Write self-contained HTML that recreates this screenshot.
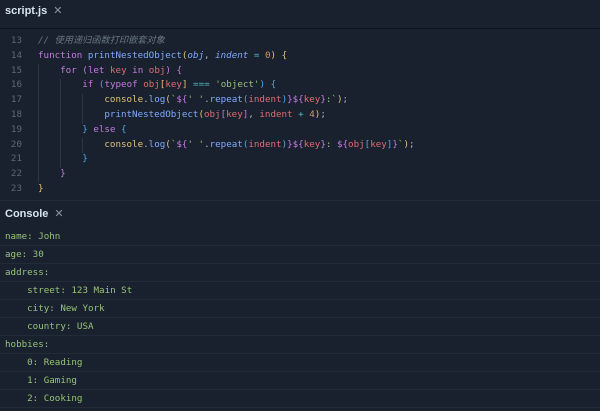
<!DOCTYPE html>
<html><head><meta charset="utf-8"><style>
body{margin:0;width:600px;height:411px;background:#18212d;overflow:hidden;font-family:"DejaVu Sans Mono","Liberation Mono",monospace;}
.tab{position:absolute;left:5px;top:4px;font:bold 11px "Liberation Sans",sans-serif;color:#d6e4f0;}
.x{color:#8a96a3;font-weight:normal;margin-left:6px;}
.hr{position:absolute;left:0;width:600px;height:1px;background:#0f151d;}
.code{position:absolute;left:0;top:34px;font-size:9.2px;line-height:14.8px;white-space:pre;}
.ln{display:inline-block;width:22px;text-align:right;color:#5d6975;margin-right:16px;}
.c{color:#6a7684;font-style:italic;font-family:"DejaVu Sans Mono","Noto Sans CJK SC",monospace}
.k{color:#c47be0}.f{color:#82aaff}.p{color:#e06c75}.y{color:#e5c07b}.b{color:#4fa6e8}.s{color:#98c379}.o{color:#56b6c2}.w{color:#abb2bf}.n{color:#d19a66}.i{color:#82aaff;font-style:italic}
.g{position:absolute;width:1px;background:#2c3743;}
.con{position:absolute;left:0;top:228px;width:600px;font-size:9.2px;color:#98c379;}
.con div{height:17px;line-height:17px;border-bottom:1px solid #222c38;padding-left:5px;white-space:pre;}
</style></head><body>
<div class="tab">script.js<span class="x">✕</span></div>
<div class="hr" style="top:28px"></div>
<div class="code"><span class="ln">13</span><span class="c">// 使用递归函数打印嵌套对象</span>
<span class="ln">14</span><span class="k">function</span> <span class="f">printNestedObject</span><span class="y">(</span><span class="i">obj</span><span class="w">,</span> <span class="i">indent</span> <span class="o">=</span> <span class="n">0</span><span class="y">)</span> <span class="y">{</span>
<span class="ln">15</span>    <span class="k">for</span> <span class="k">(</span><span class="k">let</span> <span class="p">key</span> <span class="k">in</span> <span class="p">obj</span><span class="k">)</span> <span class="k">{</span>
<span class="ln">16</span>        <span class="k">if</span> <span class="b">(</span><span class="k">typeof</span> <span class="p">obj</span><span class="y">[</span><span class="p">key</span><span class="y">]</span> <span class="o">===</span> <span class="s">'object'</span><span class="b">)</span> <span class="b">{</span>
<span class="ln">17</span>            <span class="y">console</span><span class="w">.</span><span class="f">log</span><span class="y">(</span><span class="s">`</span><span class="k">${</span><span class="s">' '</span><span class="w">.</span><span class="f">repeat</span><span class="b">(</span><span class="p">indent</span><span class="b">)</span><span class="k">}${</span><span class="p">key</span><span class="k">}</span><span class="s">:`</span><span class="y">)</span><span class="w">;</span>
<span class="ln">18</span>            <span class="f">printNestedObject</span><span class="y">(</span><span class="p">obj</span><span class="k">[</span><span class="p">key</span><span class="k">]</span><span class="w">,</span> <span class="p">indent</span> <span class="o">+</span> <span class="n">4</span><span class="y">)</span><span class="w">;</span>
<span class="ln">19</span>        <span class="b">}</span> <span class="k">else</span> <span class="b">{</span>
<span class="ln">20</span>            <span class="y">console</span><span class="w">.</span><span class="f">log</span><span class="y">(</span><span class="s">`</span><span class="k">${</span><span class="s">' '</span><span class="w">.</span><span class="f">repeat</span><span class="b">(</span><span class="p">indent</span><span class="b">)</span><span class="k">}${</span><span class="p">key</span><span class="k">}</span><span class="s">: </span><span class="k">${</span><span class="p">obj</span><span class="b">[</span><span class="p">key</span><span class="b">]</span><span class="k">}</span><span class="s">`</span><span class="y">)</span><span class="w">;</span>
<span class="ln">21</span>        <span class="b">}</span>
<span class="ln">22</span>    <span class="k">}</span>
<span class="ln">23</span><span class="y">}</span></div>
<div class="g" style="left:38px;top:64px;height:118px"></div>
<div class="g" style="left:60px;top:79px;height:89px"></div>
<div class="g" style="left:82px;top:94px;height:30px"></div>
<div class="g" style="left:82px;top:138px;height:15px"></div>
<div class="hr" style="top:200px;background:#222c38"></div>
<div class="tab" style="top:207px">Console<span class="x">✕</span></div>
<div class="con">
<div>name: John</div>
<div>age: 30</div>
<div>address:</div>
<div>    street: 123 Main St</div>
<div>    city: New York</div>
<div>    country: USA</div>
<div>hobbies:</div>
<div>    0: Reading</div>
<div>    1: Gaming</div>
<div>    2: Cooking</div>
</div>
</body></html>
